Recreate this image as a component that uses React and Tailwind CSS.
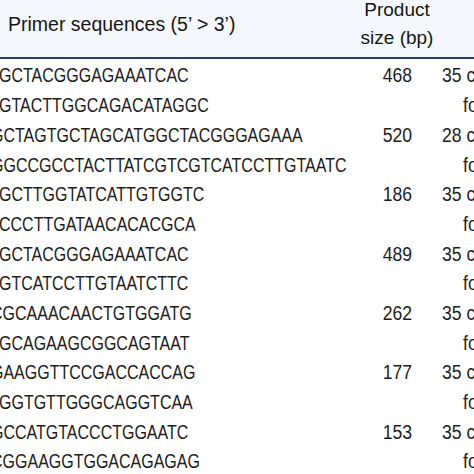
import React from 'react';

const rows = [
  { pre: '', seq: 'GCTACGGGAGAAATCAC', size: '468', note: '35 cycles' },
  { pre: '', seq: 'GTACTTGGCAGACATAGGC', size: '', note: 'for 30 s' },
  { pre: 'G', seq: 'CTAGTGCTAGCATGGCTACGGGAGAAA', size: '520', note: '28 cycles' },
  { pre: 'G', seq: 'GCCGCCTACTTATCGTCGTCATCCTTGTAATC', size: '', note: 'for 30 s' },
  { pre: '', seq: 'GCTTGGTATCATTGTGGTC', size: '186', note: '35 cycles' },
  { pre: '', seq: 'CCCTTGATAACACACGCA', size: '', note: 'for 30 s' },
  { pre: '', seq: 'GCTACGGGAGAAATCAC', size: '489', note: '35 cycles' },
  { pre: '', seq: 'GTCATCCTTGTAATCTTC', size: '', note: 'for 30 s' },
  { pre: 'C', seq: 'GCAAACAACTGTGGATG', size: '262', note: '35 cycles' },
  { pre: '', seq: 'GCAGAAGCGGCAGTAAT', size: '', note: 'for 30 s' },
  { pre: 'G', seq: 'AAGGTTCCGACCACCAG', size: '177', note: '35 cycles' },
  { pre: '', seq: 'GGTGTTGGGCAGGTCAA', size: '', note: 'for 30 s' },
  { pre: 'G', seq: 'CCATGTACCCTGGAATC', size: '153', note: '35 cycles' },
  { pre: 'C', seq: 'GGAAGGTGGACAGAGAG', size: '', note: 'for 30 s' },
];

// the table text is a condensed face; squeeze Liberation Sans horizontally
const Row = ({ row }) => (
  <div className="flex h-[29.7px] items-center leading-[28px] text-[20px] text-[#1e1e1e]">
    <div className="w-[370px] shrink-0 overflow-hidden whitespace-nowrap">
      <div className={`w-max origin-left scale-x-[0.8] ${row.pre ? 'ml-[-9px]' : 'ml-[-1px]'}`}>
        {row.pre}
        {row.seq}
      </div>
    </div>
    <div className="w-[42px] shrink-0 whitespace-nowrap text-right">
      <div className="origin-right scale-x-[0.88]">{row.size}</div>
    </div>
    <div className={`shrink-0 whitespace-nowrap ${row.size ? 'pl-[30px]' : 'pl-[51px]'}`}>
      <div className="w-max origin-left scale-x-[0.88]">{row.note}</div>
    </div>
  </div>
);

export default function App() {
  return (
    <div className="w-[474px] h-[474px] overflow-hidden bg-white font-['Liberation_Sans',Arial,sans-serif]">
      <div className="flex h-[57px] bg-[#f4f8fc] text-[#161616] leading-[28px]">
        <div className="w-[352px] shrink-0 pl-[8px] pt-[10px] text-[19.5px]">Primer sequences (5’ &gt; 3’)</div>
        <div className="w-[90px] shrink-0 mt-[-4px] text-center text-[19px]">
          <div>Product</div>
          <div>size (bp)</div>
        </div>
      </div>
      <div className="h-[2px] bg-[#2a3688]" />
      <div className="pt-[1.6px]">
        {rows.map((r, i) => (
          <Row key={i} row={r} />
        ))}
      </div>
    </div>
  );
}
